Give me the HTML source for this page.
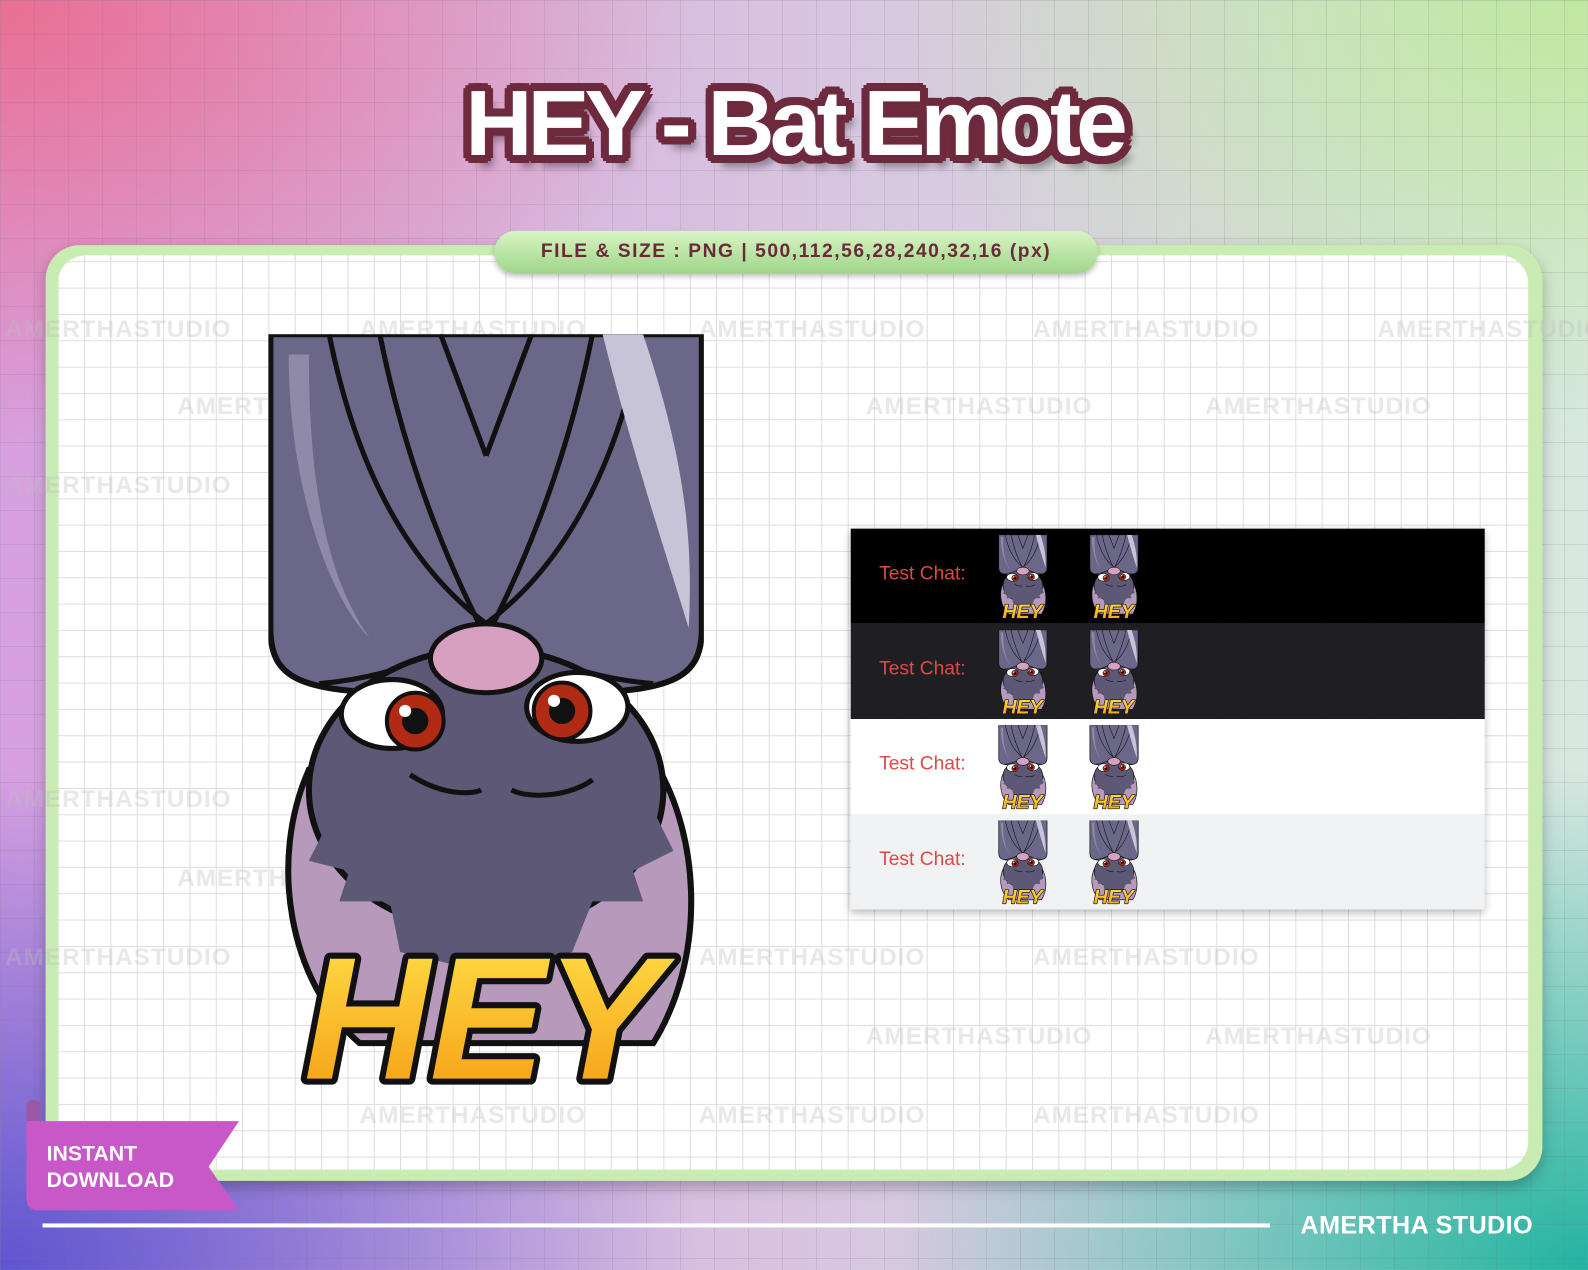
<!DOCTYPE html>
<html><head><meta charset="utf-8"><style>
*{margin:0;padding:0;box-sizing:border-box}
html,body{width:1588px;height:1270px;overflow:hidden}
body{position:relative;font-family:"Liberation Sans",sans-serif;
background:
radial-gradient(ellipse 700px 500px at 0% 100%,#5d55d0 0%,rgba(93,85,208,0) 100%),
radial-gradient(ellipse 700px 500px at 100% 100%,#22b3a0 0%,rgba(34,179,160,0) 100%),
radial-gradient(ellipse 700px 450px at 0% 0%,#ea6f93 0%,rgba(234,111,147,0) 100%),
radial-gradient(ellipse 700px 450px at 100% 0%,#bfe8a0 0%,rgba(191,232,160,0) 100%),
linear-gradient(90deg,#d7a0e0,#d8e8e0);}
#wrap{position:absolute;left:0;top:0;width:1568px;height:1254px;transform:scale(1.01276);transform-origin:0 0}
.grid{position:absolute;left:0;top:0;width:1588px;height:1270px;background-image:linear-gradient(rgba(120,120,120,.18) 1px,transparent 1px),linear-gradient(90deg,rgba(120,120,120,.18) 1px,transparent 1px);background-size:34px 34px}
.card{position:absolute;left:45px;top:242px;width:1478px;height:924px;background:#c9ecb2;border-radius:34px;box-shadow:0 6px 14px rgba(0,0,0,.25)}
.inner{position:absolute;left:57px;top:252px;width:1452px;height:903px;background-color:#fff;border-radius:28px;
background-image:linear-gradient(#ddd 1px,transparent 1px),linear-gradient(90deg,#ddd 1px,transparent 1px);background-size:26px 26px;background-position:0 6px}
.title{position:absolute;left:0;width:1568px;top:70px;text-align:center;font-weight:bold;font-size:92px;color:#fff;letter-spacing:-5px;
text-shadow:
6px 0 0 #6e2a3d,-6px 0 0 #6e2a3d,0 6px 0 #6e2a3d,0 -6px 0 #6e2a3d,
4px 4px 0 #6e2a3d,-4px 4px 0 #6e2a3d,4px -4px 0 #6e2a3d,-4px -4px 0 #6e2a3d,
8px 3px 0 #6e2a3d,-8px 3px 0 #6e2a3d,3px 8px 0 #6e2a3d,-3px 8px 0 #6e2a3d,
8px -3px 0 #6e2a3d,-8px -3px 0 #6e2a3d,3px -8px 0 #6e2a3d,-3px -8px 0 #6e2a3d,
6px 6px 0 #6e2a3d,-6px 6px 0 #6e2a3d,6px -6px 0 #6e2a3d,-6px -6px 0 #6e2a3d,
8px 12px 8px rgba(0,0,0,.35)}
.pill{position:absolute;left:488px;top:228px;width:596px;height:42px;border-radius:21px;background:linear-gradient(#d9f5c4,#9fd58a);box-shadow:0 3px 5px rgba(0,0,0,.25);
color:#6b2a3a;font-weight:bold;font-size:19px;text-align:center;line-height:42px;letter-spacing:1.5px}
.chat{position:absolute;left:840px;top:522px;width:626px;height:376px;box-shadow:0 3px 8px rgba(0,0,0,.3)}
.row{height:94px;position:relative}
.row span{position:absolute;left:28px;top:34px;color:#e04848;font-size:19px}
.mini{position:absolute;top:6px;width:50px;height:84px}
.wm{position:absolute;color:rgba(190,190,190,.35);font-weight:bold;font-size:24px;letter-spacing:1px}
.foot{position:absolute;left:42px;top:1208px;width:1212px;height:4px;background:#fff}
.studio{position:absolute;left:1284px;top:1196px;color:#fff;font-weight:bold;font-size:25px;letter-spacing:.3px}
</style></head><body>
<div class="grid"></div>
<svg width="0" height="0" style="position:absolute"><defs>
<linearGradient id="yg" x1="0" y1="0" x2="0" y2="1"><stop offset="0" stop-color="#ffe24a"/><stop offset="1" stop-color="#f59a10"/></linearGradient>
<symbol id="bat" viewBox="0 0 430 750">
<path d="M40 430 C0 520 20 640 90 700 L380 700 C430 620 430 500 380 420 Z" fill="#b79abb" stroke="#111" stroke-width="6"/>
<path d="M2 0 L428 0 L428 290 C428 340 400 352 300 355 L130 355 C30 352 2 340 2 290 Z" fill="#6b6788" stroke="#111" stroke-width="6"/>
<path d="M60 0 C100 200 200 330 380 345 M370 0 C330 200 230 330 50 345 M110 0 C140 150 190 250 215 300 M320 0 C290 150 240 250 215 300 M170 0 L215 120 M260 0 L215 120" stroke="#111" stroke-width="5" fill="none"/>
<path d="M330 0 L370 0 C410 120 420 200 415 290 C400 240 360 120 330 0Z" fill="#c8c4d8"/>
<path d="M20 20 C20 150 60 260 100 300 C50 230 40 120 40 20Z" fill="#8e8aa8"/>
<ellipse cx="215" cy="450" rx="175" ry="140" fill="#5c5876" stroke="#111" stroke-width="6"/>
<path d="M60 480 L40 520 L80 530 L70 560 L120 560 L130 610 L215 630 L300 610 L320 560 L370 560 L360 530 L400 510 L380 470 Z" fill="#5c5876"/>
<ellipse cx="215" cy="320" rx="55" ry="34" fill="#d8a0c0" stroke="#111" stroke-width="5"/>
<ellipse cx="122" cy="375" rx="50" ry="34" fill="#fff" stroke="#111" stroke-width="5"/>
<ellipse cx="305" cy="368" rx="50" ry="34" fill="#fff" stroke="#111" stroke-width="5"/>
<circle cx="145" cy="382" r="28" fill="#b02a14" stroke="#111" stroke-width="4"/>
<circle cx="290" cy="372" r="28" fill="#b02a14" stroke="#111" stroke-width="4"/>
<circle cx="145" cy="382" r="13" fill="#111"/><circle cx="290" cy="372" r="13" fill="#111"/>
<circle cx="135" cy="372" r="6" fill="#fff"/><circle cx="282" cy="362" r="6" fill="#fff"/>
<path d="M140 435 C170 455 200 455 210 450 M240 450 C260 460 300 455 320 440" stroke="#111" stroke-width="5" fill="none"/>
<text x="35" y="735" font-family="Liberation Sans,sans-serif" font-weight="bold" font-style="italic" font-size="172" fill="url(#yg)" stroke="#111" stroke-width="12" paint-order="stroke" stroke-linejoin="round">HEY</text>
</symbol></defs></svg>
<div id="wrap">
<div class="title">HEY - Bat Emote</div>
<div class="card"></div>
<div class="inner"></div>
<div class="pill">FILE &amp; SIZE : PNG | 500,112,56,28,240,32,16 (px)</div>
<div class="wm" style="left:5px;top:312px">AMERTHASTUDIO</div>
<div class="wm" style="left:355px;top:312px">AMERTHASTUDIO</div>
<div class="wm" style="left:690px;top:312px">AMERTHASTUDIO</div>
<div class="wm" style="left:1020px;top:312px">AMERTHASTUDIO</div>
<div class="wm" style="left:1360px;top:312px">AMERTHASTUDIO</div>
<div class="wm" style="left:175px;top:388px">AMERTHASTUDIO</div>
<div class="wm" style="left:855px;top:388px">AMERTHASTUDIO</div>
<div class="wm" style="left:1190px;top:388px">AMERTHASTUDIO</div>
<div class="wm" style="left:5px;top:466px">AMERTHASTUDIO</div>
<div class="wm" style="left:5px;top:776px">AMERTHASTUDIO</div>
<div class="wm" style="left:175px;top:854px">AMERTHASTUDIO</div>
<div class="wm" style="left:5px;top:932px">AMERTHASTUDIO</div>
<div class="wm" style="left:690px;top:932px">AMERTHASTUDIO</div>
<div class="wm" style="left:1020px;top:932px">AMERTHASTUDIO</div>
<div class="wm" style="left:855px;top:1010px">AMERTHASTUDIO</div>
<div class="wm" style="left:1190px;top:1010px">AMERTHASTUDIO</div>
<div class="wm" style="left:355px;top:1088px">AMERTHASTUDIO</div>
<div class="wm" style="left:690px;top:1088px">AMERTHASTUDIO</div>
<div class="wm" style="left:1020px;top:1088px">AMERTHASTUDIO</div>
<svg style="position:absolute;left:265px;top:330px" width="430" height="750"><use href="#bat"/></svg>
<div class="chat">
<div class="row" style="background:#000"><span>Test Chat:</span><svg class="mini" style="left:145px"><use href="#bat"/></svg><svg class="mini" style="left:235px"><use href="#bat"/></svg></div>
<div class="row" style="background:#1f1f23"><span>Test Chat:</span><svg class="mini" style="left:145px"><use href="#bat"/></svg><svg class="mini" style="left:235px"><use href="#bat"/></svg></div>
<div class="row" style="background:#fff"><span>Test Chat:</span><svg class="mini" style="left:145px"><use href="#bat"/></svg><svg class="mini" style="left:235px"><use href="#bat"/></svg></div>
<div class="row" style="background:#f1f2f4"><span>Test Chat:</span><svg class="mini" style="left:145px"><use href="#bat"/></svg><svg class="mini" style="left:235px"><use href="#bat"/></svg></div>
</div>
<svg style="position:absolute;left:26px;top:1082px" width="212" height="115" viewBox="0 0 212 115">
<path d="M0 12 Q0 0 14 6 L14 25 L0 25Z" fill="#9a58a8"/>
<path d="M0 25 L210 25 L180 70 L210 113 L12 113 Q0 113 0 101 Z" fill="#c858c8"/>
<text x="20" y="64" fill="#fff" font-weight="bold" font-size="21" font-family="Liberation Sans,sans-serif">INSTANT</text>
<text x="20" y="90" fill="#fff" font-weight="bold" font-size="21" font-family="Liberation Sans,sans-serif">DOWNLOAD</text>
</svg>
<div class="foot"></div>
<div class="studio">AMERTHA STUDIO</div>
</div>
</body></html>
